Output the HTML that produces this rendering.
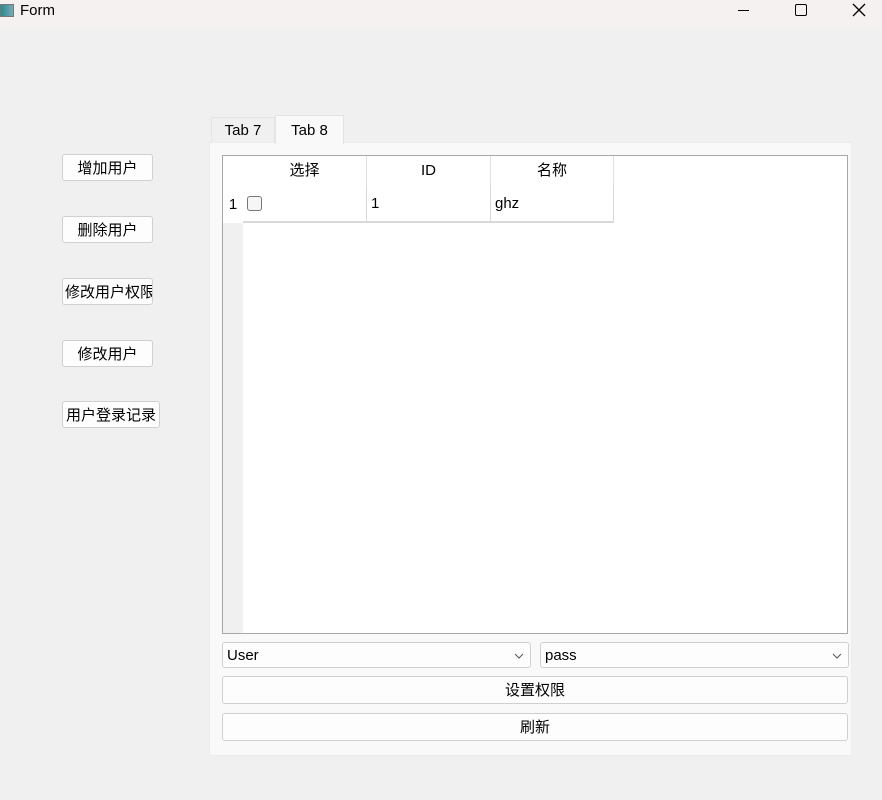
<!DOCTYPE html>
<html><head><meta charset="utf-8"><style>
*{box-sizing:border-box;margin:0;padding:0}
body{width:882px;height:800px;background:#f0f0f0;font-family:"Liberation Sans","Noto Sans CJK SC",sans-serif;font-size:15px;color:#000;position:relative;overflow:hidden}
.a{position:absolute}
.title{left:0;top:0;width:882px;height:28px;background:#f4f1f0}
.btn{position:absolute;background:#fdfdfd;border:1px solid #d0d0d0;border-radius:3px;text-align:center;font-size:15px;white-space:nowrap;overflow:hidden}
.hd{position:absolute;top:0;height:30px;line-height:30px;text-align:center;border-right:1px solid #e0e0e0;background:#fff}
.cell{position:absolute;top:30px;height:37px;line-height:36px;border-right:1px solid #d8d8d8;border-bottom:2px solid #d8d8d8;background:#fff;padding-left:4px}
</style></head><body>
<div class="a title"></div>
<div class="a" style="left:0;top:4px;width:14px;height:13px;border:1px solid #777;background:linear-gradient(90deg,#2a8a8a,#7ab)"></div>
<div class="a" style="left:20px;top:2px;font-size:15px">Form</div>
<div class="a" style="left:738px;top:10px;width:11px;height:1px;background:#000"></div>
<div class="a" style="left:795px;top:4px;width:12px;height:12px;border:1.3px solid #000;border-radius:2px"></div>
<svg class="a" style="left:852px;top:3px" width="14" height="14"><path d="M1 1L13 13M13 1L1 13" stroke="#000" stroke-width="1.3"/></svg>

<div class="btn" style="left:62px;top:154px;width:91px;height:27px;line-height:27px">增加用户</div>
<div class="btn" style="left:62px;top:216px;width:91px;height:27px;line-height:27px">删除用户</div>
<div class="btn" style="left:62px;top:278px;width:91px;height:27px;line-height:27px;text-align:left;padding-left:2px">修改用户权限</div>
<div class="btn" style="left:62px;top:340px;width:91px;height:27px;line-height:27px">修改用户</div>
<div class="btn" style="left:62px;top:401px;width:98px;height:27px;line-height:27px">用户登录记录</div>

<div class="a" style="left:211px;top:117px;width:64px;height:26px;background:#f0f0f0;border:1px solid #e4e4e4;border-bottom:none;line-height:26px;text-align:center">Tab 7</div>
<div class="a" style="left:209px;top:142px;width:643px;height:614px;background:#f9f9f9;border:1px solid #ececec"></div>
<div class="a" style="left:275px;top:115px;width:69px;height:29px;background:#f9f9f9;border:1px solid #e4e4e4;border-bottom:none;line-height:29px;text-align:center">Tab 8</div>

<div class="a" style="left:222px;top:155px;width:626px;height:479px;background:#fff;border:1px solid #a8a8a8">
 <div class="a" style="left:0;top:67px;width:20px;height:410px;background:#f0f0f0"></div>
 <div class="hd" style="left:20px;width:124px">选择</div>
 <div class="hd" style="left:144px;width:124px">ID</div>
 <div class="hd" style="left:268px;width:123px">名称</div>
 <div class="a" style="left:0;top:30px;width:20px;height:37px;line-height:37px;text-align:center">1</div>
 <div class="cell" style="left:20px;width:124px"><span style="display:inline-block;width:15px;height:15px;border:1px solid #777;border-radius:3px;vertical-align:middle;margin-top:-2px;background:#f6f6f6"></span></div>
 <div class="cell" style="left:144px;width:124px;line-height:35px">1</div>
 <div class="cell" style="left:268px;width:123px;line-height:35px">ghz</div>
</div>

<div class="btn" style="left:222px;top:642px;width:309px;height:26px;line-height:26px;text-align:left;padding-left:4px">User<svg class="a" style="right:6px;top:10px" width="10" height="7"><path d="M1 1L5 5L9 1" fill="none" stroke="#555"/></svg></div>
<div class="btn" style="left:540px;top:642px;width:309px;height:26px;line-height:26px;text-align:left;padding-left:4px">pass<svg class="a" style="right:6px;top:10px" width="10" height="7"><path d="M1 1L5 5L9 1" fill="none" stroke="#555"/></svg></div>
<div class="btn" style="left:222px;top:676px;width:626px;height:28px;line-height:28px">设置权限</div>
<div class="btn" style="left:222px;top:713px;width:626px;height:28px;line-height:28px">刷新</div>
</body></html>
